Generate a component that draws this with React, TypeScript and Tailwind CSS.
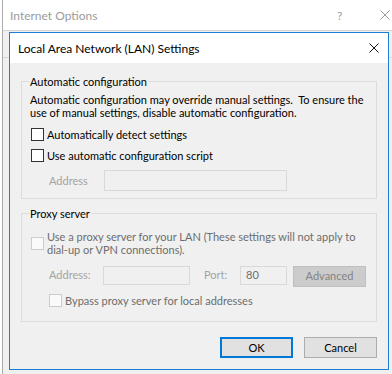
import React from "react";

function XIcon({ color, size = 10 }: { color: string; size?: number }) {
  return (
    <svg width={size} height={size} viewBox="0 0 10 10" className="block">
      <path d="M0.5 0.5 L9.5 9.5 M9.5 0.5 L0.5 9.5" stroke={color} strokeWidth="1" fill="none" />
    </svg>
  );
}

function Box({ disabled = false }: { disabled?: boolean }) {
  return (
    <span
      className={
        disabled
          ? "block w-[13px] h-[13px] shrink-0 border border-[#cccccc] bg-[#fafafa]"
          : "block w-[13px] h-[13px] shrink-0 border border-[#333333] bg-white"
      }
    />
  );
}

export default function App() {
  return (
    <div className="relative w-[392px] h-[374px] overflow-hidden bg-white font-['Lato',sans-serif] text-black">
      {/* parent window: Internet Options */}
      <div className="ml-[2px] h-full border-l border-[#ababab] flex flex-col">
        <div className="h-[31px] flex items-center bg-white border-b border-[#d4d4d4] shrink-0">
          <span className="pl-[7px] text-[12px] leading-[15px] text-[#9b9b9b]">Internet Options</span>
          <span className="ml-auto w-[6px] text-[12px] leading-[15px] text-[#9b9b9b]">?</span>
          <span className="ml-[37px] mr-[2px]">
            <XIcon color="#9b9b9b" />
          </span>
        </div>
        <div className="flex-1 bg-[#f0f0f0]">
          <div className="h-[27px] border-b border-[#d9d9d9]" />
        </div>
      </div>

      {/* dialog: LAN settings */}
      <div className="absolute left-[9px] top-[32px] w-[380px] h-[338px] border border-[#1a7fd6] bg-[#f0f0f0] flex flex-col">
        <div className="h-[30px] shrink-0 bg-white flex items-center pl-[8px] pr-[9px]">
          <span className="text-[12px] leading-[15px]">Local Area Network (LAN) Settings</span>
          <span className="ml-auto">
            <XIcon color="#111111" />
          </span>
        </div>

        <div className="flex-1 flex flex-col pt-[11px] px-[11px] text-[11px]">
          {/* Automatic configuration */}
          <fieldset className="border border-[#dcdcdc] px-[7px] pb-[7px]">
            <legend className="px-[1px] leading-[15px]">Automatic configuration</legend>
            <p className="mt-[4px] pl-[1px] leading-[13px] whitespace-nowrap">
              Automatic configuration may override manual settings.&nbsp; To ensure the
              <br />
              use of manual settings, disable automatic configuration.
            </p>
            <div className="mt-[9px] ml-[2px] flex items-center">
              <Box />
              <span className="ml-[3px] leading-[13px]">Automatically detect settings</span>
            </div>
            <div className="mt-[8px] ml-[2px] flex items-center">
              <Box />
              <span className="ml-[3px] leading-[13px]">Use automatic configuration script</span>
            </div>
            <div className="mt-[8px] ml-[20px] flex items-center">
              <span className="w-[55px] text-[#a3a3a3] leading-[13px]">Address</span>
              <span className="block w-[183px] h-[21px] border border-[#d9d9d9] bg-[#f0f0f0]" />
            </div>
          </fieldset>

          {/* Proxy server */}
          <fieldset className="mt-[7px] border border-[#dcdcdc] px-[7px] pb-[14px]">
            <legend className="px-[1px] leading-[15px]">Proxy server</legend>
            <div className="mt-[9px] ml-[2px] flex items-center">
              <Box disabled />
              <span className="ml-[3px] leading-[13px] text-[#6d6d6d] whitespace-nowrap">
                Use a proxy server for your LAN (These settings will not apply to
                <br />
                dial-up or VPN connections).
              </span>
            </div>
            <div className="mt-[10px] ml-[20px] flex items-start">
              <span className="w-[54px] h-[19px] flex items-center text-[#a3a3a3]">Address:</span>
              <span className="block w-[87px] h-[19px] border border-[#d9d9d9] bg-[#f0f0f0]" />
              <span className="ml-[14px] w-[36px] h-[19px] flex items-center text-[#a3a3a3]">Port:</span>
              <span className="w-[47px] h-[19px] border border-[#d9d9d9] bg-[#f0f0f0] flex items-center pl-[5px] text-[#6d6d6d]">
                80
              </span>
              <span className="ml-[6px] w-[73px] h-[21px] border border-[#bfbfbf] bg-[#cccccc] flex items-center justify-center text-[#838383]">
                Advanced
              </span>
            </div>
            <div className="mt-[7px] ml-[20px] flex items-center">
              <Box disabled />
              <span className="ml-[3px] leading-[13px] text-[#6d6d6d]">Bypass proxy server for local addresses</span>
            </div>
          </fieldset>

          {/* Buttons */}
          <div className="mt-[15px] flex justify-end gap-[11px]">
            <button className="w-[73px] h-[21px] border-2 border-[#0078d7] bg-[#e1e1e1] flex items-center justify-center leading-[13px]">
              OK
            </button>
            <button className="w-[73px] h-[21px] border border-[#adadad] bg-[#e1e1e1] flex items-center justify-center leading-[13px]">
              Cancel
            </button>
          </div>
        </div>
      </div>
    </div>
  );
}
